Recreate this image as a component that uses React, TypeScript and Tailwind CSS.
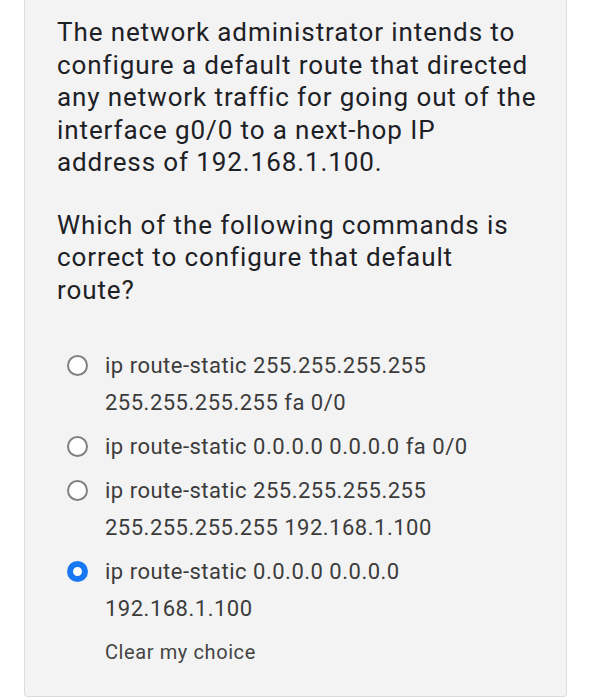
import React from "react";

const options = [
  { lines: ["ip route-static 255.255.255.255", "255.255.255.255 fa 0/0"], checked: false },
  { lines: ["ip route-static 0.0.0.0 0.0.0.0 fa 0/0"], checked: false },
  { lines: ["ip route-static 255.255.255.255", "255.255.255.255 192.168.1.100"], checked: false },
  { lines: ["ip route-static 0.0.0.0 0.0.0.0", "192.168.1.100"], checked: true },
];

function Radio({ checked }: { checked: boolean }) {
  return checked ? (
    <span className="mt-[8px] block h-[21px] w-[21px] shrink-0 rounded-full border-[6px] border-[#1877f2] bg-white" />
  ) : (
    <span className="mt-[8px] block h-[21px] w-[21px] shrink-0 rounded-full border-2 border-[#808080] bg-white" />
  );
}

export default function App() {
  return (
    <div className="min-h-[700px] bg-white" style={{ fontFamily: "Roboto, 'Noto Sans', sans-serif" }}>
      <div className="mx-[24px] h-[697px] rounded-b-[4px] border border-t-0 border-[#dcdcdc] bg-[#f3f3f3] pl-[32px] pr-[12px] pt-[16px]">
        <div className="text-[26px] leading-[32.5px] tracking-[0.9px] text-[#1d2126]">
          <p>
            The network administrator intends to
            <br />
            configure a default route that directed
            <br />
            any network traffic for going out of the
            <br />
            interface g0/0 to a next-hop IP
            <br />
            address of 192.168.1.100.
          </p>
          <p className="mt-[30px]">
            Which of the following commands is
            <br />
            correct to configure that default
            <br />
            route?
          </p>
        </div>
        <div className="mt-[40.5px] flex flex-col gap-[7px] pl-[10px]">
          {options.map((o, i) => (
            <div key={i} className="flex gap-[17px]">
              <Radio checked={o.checked} />
              <div className="text-[22px] leading-[37px] tracking-[0.5px] text-[#3c3c3c]">
                {o.lines.map((l, j) => (
                  <div key={j}>{l}</div>
                ))}
              </div>
            </div>
          ))}
          <div className="pl-[38px] text-[20px] leading-[37px] tracking-[0.6px] text-[#444]">Clear my choice</div>
        </div>
      </div>
    </div>
  );
}
